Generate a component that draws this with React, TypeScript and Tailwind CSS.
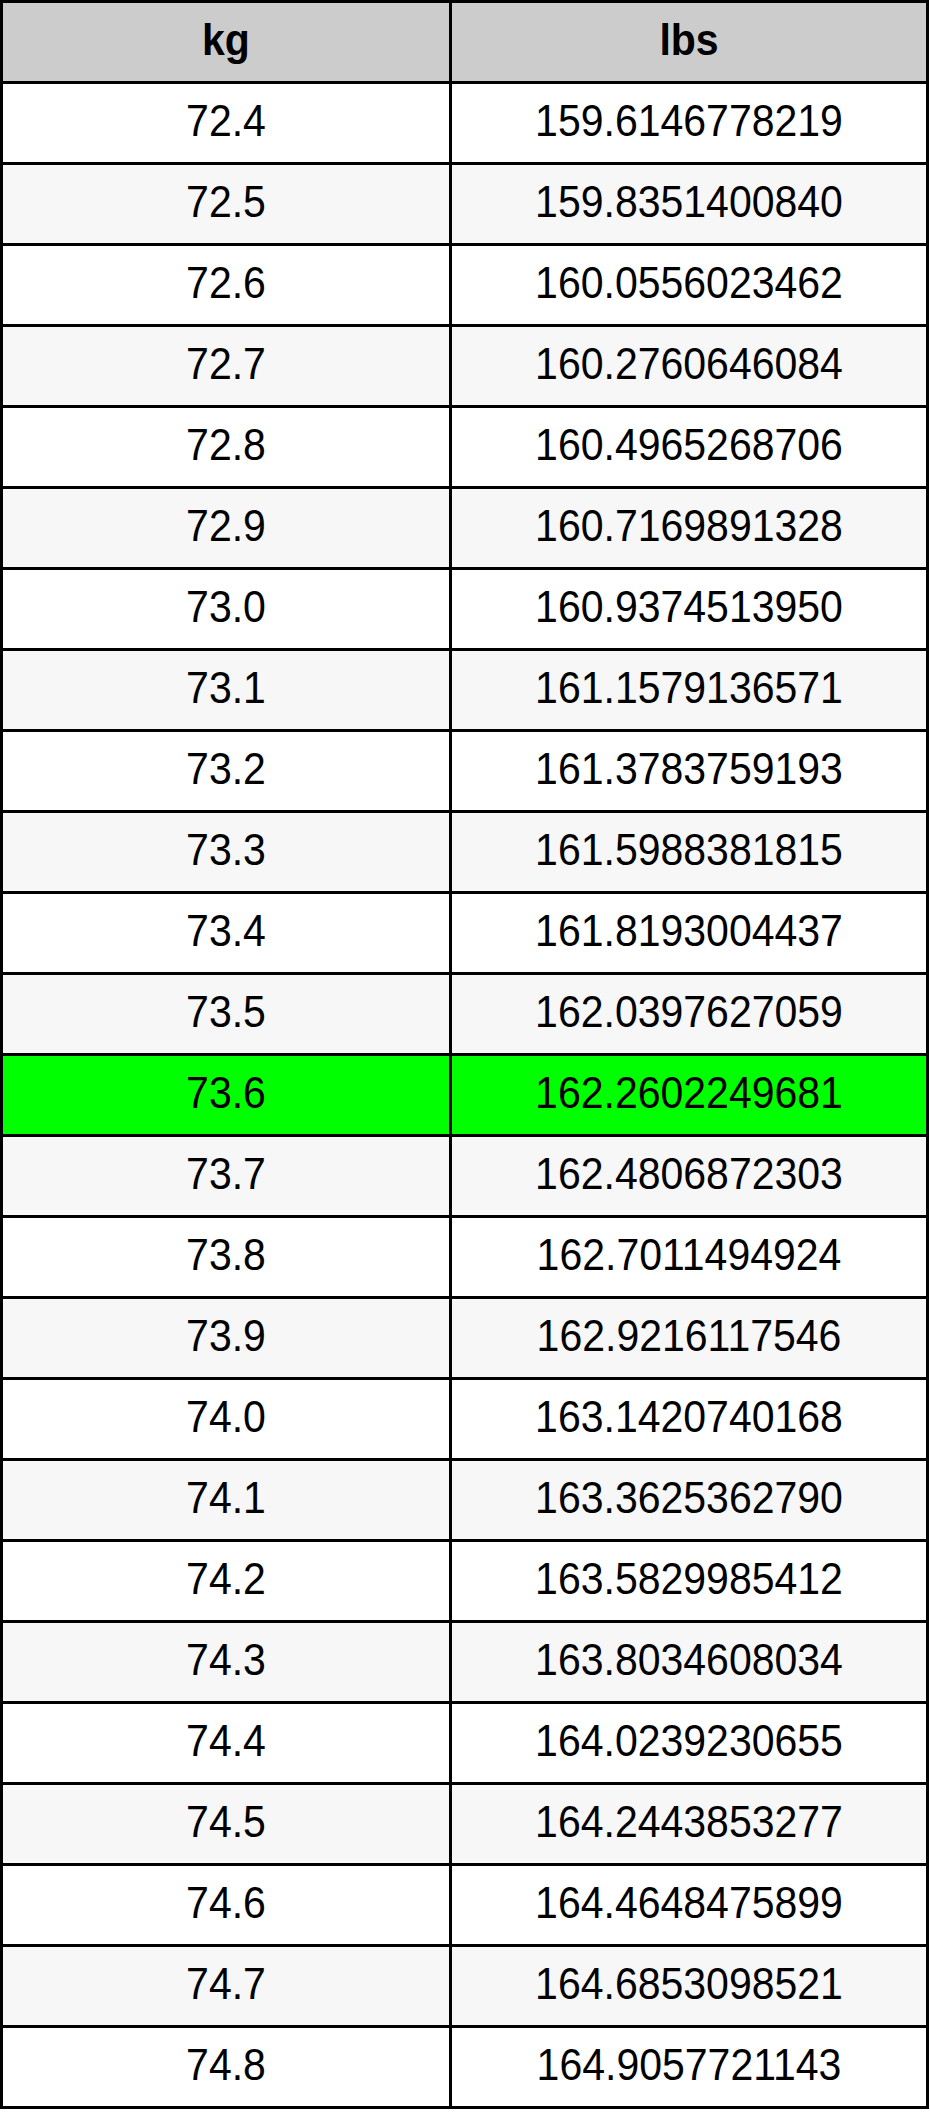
const rows: [string, string][] = [
  ["72.4", "159.6146778219"],
  ["72.5", "159.8351400840"],
  ["72.6", "160.0556023462"],
  ["72.7", "160.2760646084"],
  ["72.8", "160.4965268706"],
  ["72.9", "160.7169891328"],
  ["73.0", "160.9374513950"],
  ["73.1", "161.1579136571"],
  ["73.2", "161.3783759193"],
  ["73.3", "161.5988381815"],
  ["73.4", "161.8193004437"],
  ["73.5", "162.0397627059"],
  ["73.6", "162.2602249681"],
  ["73.7", "162.4806872303"],
  ["73.8", "162.7011494924"],
  ["73.9", "162.9216117546"],
  ["74.0", "163.1420740168"],
  ["74.1", "163.3625362790"],
  ["74.2", "163.5829985412"],
  ["74.3", "163.8034608034"],
  ["74.4", "164.0239230655"],
  ["74.5", "164.2443853277"],
  ["74.6", "164.4648475899"],
  ["74.7", "164.6853098521"],
  ["74.8", "164.9057721143"],
];

const HIGHLIGHT = "73.6";

function Cell({ children, bg, bold }: { children: React.ReactNode; bg: string; bold?: boolean }) {
  return (
    <div
      className={`h-[81px] flex items-center justify-center pb-[3px] border-r-[3px] border-b-[3px] border-black ${bg} ${
        bold ? "font-bold" : ""
      }`}
    >
      <span className="inline-block scale-y-[1.06]">{children}</span>
    </div>
  );
}

export default function App() {
  return (
    <div className="bg-white min-h-[2115px] w-[930px] text-black">
      <div
        className="grid grid-cols-[449px_477px] w-[929px] border-l-[3px] border-t-[3px] border-black text-[41px] leading-none"
        style={{ fontFamily: '"Liberation Sans", Arial, sans-serif' }}
      >
        {/* header */}
        <Cell bg="bg-[#cccccc]" bold>kg</Cell>
        <Cell bg="bg-[#cccccc]" bold>lbs</Cell>

        {rows.map(([kg, lbs], i) => {
          const bg = kg === HIGHLIGHT ? "bg-[#00ff00]" : i % 2 === 0 ? "bg-white" : "bg-[#f7f7f7]";
          return [
            <Cell key={kg + "a"} bg={bg}>{kg}</Cell>,
            <Cell key={kg + "b"} bg={bg}>{lbs}</Cell>,
          ];
        })}
      </div>
    </div>
  );
}
